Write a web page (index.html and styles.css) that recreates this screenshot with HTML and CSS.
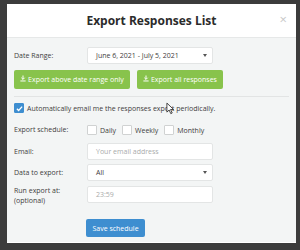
FILE: index.html
```html
<!DOCTYPE html>
<html lang="en">

<head>
    <meta charset="UTF-8">
    <meta name="viewport" content="width=device-width, initial-scale=1.0">
    <link rel="stylesheet" href="styles.css">
    <title>Export Responses List</title>
</head>

<body>
    <div class="modal">
        <div class="modal-head">
            <h1 class="title">Export Responses List</h1>
            <span class="close">&times;</span>
        </div>
        <div class="modal-body">
            <div class="row">
                <label class="lbl">Date Range:</label>
                <div class="select">June 6, 2021 - July 5, 2021<span class="caret"></span></div>
            </div>
            <div class="btns">
                <button class="btn green">
                    <svg width="6" height="7" viewBox="0 0 8 8"><path d="M4 0v5M1.8 3l2.2 2.2L6.2 3M0.5 7.3h7" stroke="#fff" stroke-width="1.3" fill="none"/></svg>
                    Export above date range only</button>
                <button class="btn green">
                    <svg width="6" height="7" viewBox="0 0 8 8"><path d="M4 0v5M1.8 3l2.2 2.2L6.2 3M0.5 7.3h7" stroke="#fff" stroke-width="1.3" fill="none"/></svg>
                    Export all responses</button>
            </div>
            <hr class="sep">
            <div class="auto">
                <span class="cb checked"><svg width="7" height="7" viewBox="0 0 8 8"><path d="M1 4.2l2 2L7 1.8" stroke="#fff" stroke-width="1.5" fill="none"/></svg></span>
                Automatically email me the responses export periodically.
                <svg class="cursor" width="9" height="13" viewBox="0 0 10 14"><path d="M1 1v10l2.5-2.3 1.8 4 1.6-.7-1.8-3.9H8.5z" fill="#fff" stroke="#222" stroke-width="0.9"/></svg>
            </div>
            <div class="row sched">
                <label class="lbl">Export schedule:</label>
                <div class="checks">
                    <span class="opt"><span class="cb"></span>Daily</span>
                    <span class="opt"><span class="cb"></span>Weekly</span>
                    <span class="opt"><span class="cb"></span>Monthly</span>
                </div>
            </div>
            <div class="row">
                <label class="lbl">Email:</label>
                <div class="input ph">Your email address</div>
            </div>
            <div class="row">
                <label class="lbl">Data to export:</label>
                <div class="select">All<span class="caret"></span></div>
            </div>
            <div class="row top">
                <label class="lbl">Run export at:<br>(optional)</label>
                <div class="input ph">23:59</div>
            </div>
            <div class="row">
                <span></span>
                <button class="btn blue">Save schedule</button>
            </div>
        </div>
    </div>
</body>

</html>
```

FILE: styles.css
```css
body {
    margin: 0;
    width: 300px;
    height: 250px;
    background: #3c3c3c;
    font-family: "Open Sans", sans-serif;
    font-size: 7px;
    color: #3f4040;
    padding: 4px 0 0 7px;
    box-sizing: border-box;
}

.modal {
    width: 289px;
    height: 239px;
    background: #f3f5f5;
    border-bottom: 1px solid #fff;
    box-sizing: border-box;
}

.modal-head {
    position: relative;
    height: 33px;
    background: #fff;
    border-bottom: 1px solid #e6e8e8;
    display: flex;
    align-items: center;
    justify-content: center;
}

.title {
    margin: 0;
    font-size: 12px;
    font-weight: 700;
    color: #2b2b2b;
}

.close {
    position: absolute;
    right: 9px;
    top: 6px;
    font-size: 13px;
    color: #c8c8c8;
}

.modal-body {
    padding: 9px 7px 0 7px;
}

.row {
    display: grid;
    grid-template-columns: 73px 126px;
    align-items: center;
    margin-bottom: 4px;
}

.row.sched {
    margin-bottom: 8px;
}

.row.top {
    align-items: start;
    margin-top: 5px;
}

.lbl {
    line-height: 10px;
}

.select,
.input {
    position: relative;
    height: 17px;
    line-height: 15px;
    background: #fff;
    border: 1px solid #e3e5e5;
    border-radius: 2px;
    padding-left: 8px;
    box-sizing: border-box;
}

.ph {
    color: #a9abab;
}

.caret {
    position: absolute;
    right: 5px;
    top: 6px;
    border-left: 2.5px solid transparent;
    border-right: 2.5px solid transparent;
    border-top: 3px solid #555;
}

.btns {
    display: flex;
    gap: 7px;
    margin-top: 6px;
}

.btn {
    font-family: "Open Sans", sans-serif;
    font-size: 7px;
    color: #fff;
    border: none;
    border-radius: 2px;
    height: 19px;
    padding: 0;
    white-space: nowrap;
}

.green {
    background: #88c34c;
}

.btns .btn:first-child {
    width: 116px;
}

.btns .btn:last-child {
    width: 86px;
}

.blue {
    background: #3e8ed0;
    width: 59px;
    height: 18px;
    margin-top: 9px;
    margin-left: -1px;
}

.sep {
    border: none;
    border-top: 1px solid #e2e4e4;
    margin: 7px 0 5px 0;
}

.auto {
    position: relative;
    display: flex;
    align-items: center;
    gap: 3px;
    height: 12px;
    margin-bottom: 11px;
}

.cursor {
    position: absolute;
    left: 152px;
    top: 0;
}

.cb {
    display: inline-flex;
    align-items: center;
    justify-content: center;
    width: 10px;
    height: 10px;
    border: 1px solid #d0d2d2;
    background: #fff;
    border-radius: 1px;
    box-sizing: border-box;
}

.cb.checked {
    background: #3e8ed0;
    border-color: #3e8ed0;
}

.checks {
    display: flex;
    gap: 6px;
}

.opt {
    display: flex;
    align-items: center;
    gap: 3px;
}
```
